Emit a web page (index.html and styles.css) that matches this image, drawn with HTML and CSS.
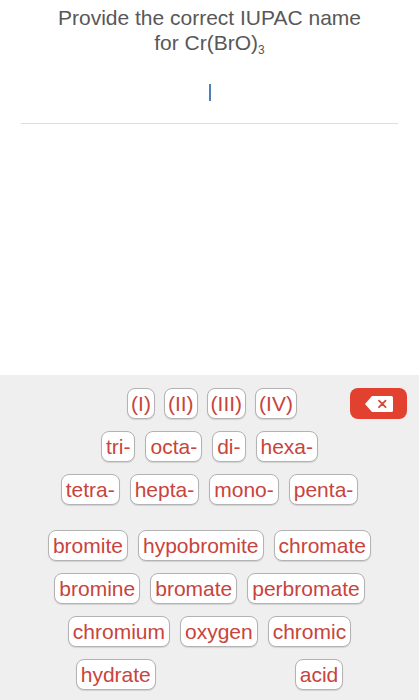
FILE: index.html
```html
<!DOCTYPE html>
<html>
<head>
<meta charset="utf-8">
<link rel="stylesheet" href="styles.css">
</head>
<body>
<div class="question">
  <p class="prompt">Provide the correct IUPAC name<br>for Cr(BrO)<span class="sub">3</span></p>
  <div class="answer"><span class="cursor"></span></div>
</div>
<div class="keyboard">
  <div class="group">
    <div class="row row-top">
      <div class="row-mid">
        <span class="tile tile-narrow">(I)</span>
        <span class="tile tile-narrow">(II)</span>
        <span class="tile tile-narrow">(III)</span>
        <span class="tile tile-narrow">(IV)</span>
      </div>
      <button class="delete" aria-label="delete">
        <svg width="28" height="16" viewBox="0 0 28 16">
          <path d="M7 0 H26.5 A1.5 1.5 0 0 1 28 1.5 V14.5 A1.5 1.5 0 0 1 26.5 16 H7 L0 8 Z" fill="#fff"/>
          <path d="M14 4.6 L20.6 11.2 M20.6 4.6 L14 11.2" stroke="#d9463a" stroke-width="1.8" stroke-linecap="round"/>
        </svg>
      </button>
    </div>
    <div class="row">
      <span class="tile">tri-</span>
      <span class="tile">octa-</span>
      <span class="tile">di-</span>
      <span class="tile">hexa-</span>
    </div>
    <div class="row">
      <span class="tile">tetra-</span>
      <span class="tile">hepta-</span>
      <span class="tile">mono-</span>
      <span class="tile">penta-</span>
    </div>
  </div>
  <div class="group group-words">
    <div class="row">
      <span class="tile">bromite</span>
      <span class="tile">hypobromite</span>
      <span class="tile">chromate</span>
    </div>
    <div class="row">
      <span class="tile">bromine</span>
      <span class="tile">bromate</span>
      <span class="tile">perbromate</span>
    </div>
    <div class="row">
      <span class="tile">chromium</span>
      <span class="tile">oxygen</span>
      <span class="tile">chromic</span>
    </div>
    <div class="row">
      <span class="tile">hydrate</span>
      <span class="spacer"></span>
      <span class="tile">acid</span>
    </div>
  </div>
</div>
</body>
</html>
```

FILE: styles.css
```css
html, body {
  margin: 0;
  padding: 0;
  background: #ffffff;
  font-family: "Liberation Sans", Arial, sans-serif;
}

.question {
  height: 375px;
  box-sizing: border-box;
  padding-top: 5px;
  background: #ffffff;
}

.prompt {
  margin: 0;
  text-align: center;
  font-size: 21px;
  line-height: 25px;
  color: #585858;
}

.sub {
  font-size: 12px;
  line-height: 1;
  position: relative;
  top: 4px;
}

.answer {
  margin: 0 21px;
  padding-top: 29px;
  padding-bottom: 22px;
  border-bottom: 1px solid #dedede;
  display: flex;
  justify-content: center;
}

.cursor {
  display: block;
  width: 2px;
  height: 17px;
  margin-left: 1px;
  background: #4f7fb3;
}

.keyboard {
  height: 325px;
  box-sizing: border-box;
  padding-top: 13px;
  background: #efeff0;
  display: flex;
  flex-direction: column;
  gap: 25px;
}

.group {
  display: flex;
  flex-direction: column;
  gap: 12px;
}

.row {
  display: flex;
  justify-content: center;
  gap: 10px;
}

.row-top {
  display: grid;
  grid-template-columns: 1fr auto 1fr;
  align-items: start;
}

.row-mid {
  grid-column: 2;
  display: flex;
  gap: 9px;
  padding-left: 5px;
}

.tile {
  display: block;
  box-sizing: border-box;
  height: 31px;
  padding: 0 4px;
  border: 1px solid #b3b3b3;
  border-radius: 8px;
  background: #ffffff;
  box-shadow: 0 1px 1px rgba(0, 0, 0, 0.12);
  color: #c8443c;
  font-size: 21px;
  line-height: 29px;
  white-space: nowrap;
}

.tile-narrow {
  padding: 0 3px;
}

.spacer {
  display: block;
  width: 119px;
}

.delete {
  grid-column: 3;
  justify-self: end;
  margin: 0 12px 0 0;
  width: 57px;
  height: 31px;
  padding: 0;
  border: none;
  border-radius: 8px;
  background: #e2412f;
  display: flex;
  align-items: center;
  justify-content: center;
}

.delete svg {
  display: block;
}
```
